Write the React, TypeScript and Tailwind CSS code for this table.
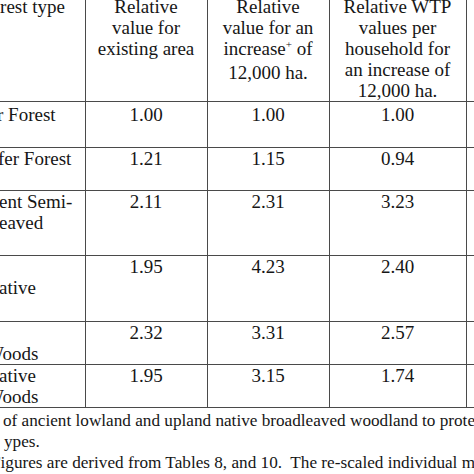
import React from "react";

const rows: { left: [string, number][]; h: string; pt: string; v: [string, string, string] }[] = [
  { left: [["r Forest", -3]], h: "h-[46px]", pt: "pt-[2px]", v: ["1.00", "1.00", "1.00"] },
  { left: [["fer Forest", -2]], h: "h-[43px]", pt: "pt-0", v: ["1.21", "1.15", "0.94"] },
  { left: [["ent Semi-", -1], ["eaved", -1]], h: "h-[65px]", pt: "pt-0", v: ["2.11", "2.31", "3.23"] },
  { left: [["\u00a0", 0], ["ative", -1]], h: "h-[66px]", pt: "pt-0", v: ["1.95", "4.23", "2.40"] },
  { left: [["\u00a0", 0], ["Woods", -14]], h: "h-[43px]", pt: "pt-0", v: ["2.32", "3.31", "2.57"] },
  { left: [["ative", -1], ["Woods", -14]], h: "h-[43px]", pt: "pt-0", v: ["1.95", "3.15", "1.74"] },
];

export default function App() {
  const cell = "border border-[#4a4a4a] align-top p-0";
  return (
    <div className="w-[474px] h-[474px] overflow-hidden bg-white font-['Liberation_Serif',serif] text-[19px] leading-[21px] text-[#161616]">
      <table className="border-collapse table-fixed w-[546px] -mt-[4px]">
        <colgroup>
          <col className="w-[85px]" />
          <col className="w-[122px]" />
          <col className="w-[122px]" />
          <col className="w-[137px]" />
          <col className="w-[80px]" />
        </colgroup>
        <tbody>
          <tr className="h-[105px]">
            <td className={`${cell} border-l-0 border-t-0`}>
              <div className="-ml-[20px] whitespace-nowrap">Forest type</div>
            </td>
            <td className={`${cell} border-t-0 text-center`}>
              <div>Relative</div>
              <div>value for</div>
              <div>existing area</div>
            </td>
            <td className={`${cell} border-t-0 text-center`}>
              <div>Relative</div>
              <div>value for an</div>
              <div>
                increase<span className="text-[11px] relative -top-[7px]">+</span> of
              </div>
              <div>12,000 ha.</div>
            </td>
            <td className={`${cell} border-t-0 text-center`}>
              <div>Relative WTP</div>
              <div>values per</div>
              <div>household for</div>
              <div>an increase of</div>
              <div>12,000 ha.</div>
            </td>
            <td className={`${cell} border-t-0 border-r-0`}></td>
          </tr>
          {rows.map((r, i) => (
            <tr key={i} className={r.h}>
              <td className={`${cell} border-l-0 ${r.pt}`}>
                {r.left.map(([t, m], j) => (
                  <div key={j} className="whitespace-nowrap" style={{ marginLeft: m }}>
                    {t}
                  </div>
                ))}
              </td>
              {r.v.map((v, j) => (
                <td key={j} className={`${cell} text-center ${r.pt}`}>
                  {v}
                </td>
              ))}
              <td className={`${cell} border-r-0`}></td>
            </tr>
          ))}
        </tbody>
      </table>
      <div className="whitespace-pre text-[17.2px] leading-[21px] mt-[2px]">
        <div className="ml-[3px]">of ancient lowland and upland native broadleaved woodland to protect</div>
        <div className="ml-[4px]">ypes.</div>
        <div className="-ml-[9px]">Figures are derived from Tables 8, and 10.  The re-scaled individual means</div>
      </div>
    </div>
  );
}
